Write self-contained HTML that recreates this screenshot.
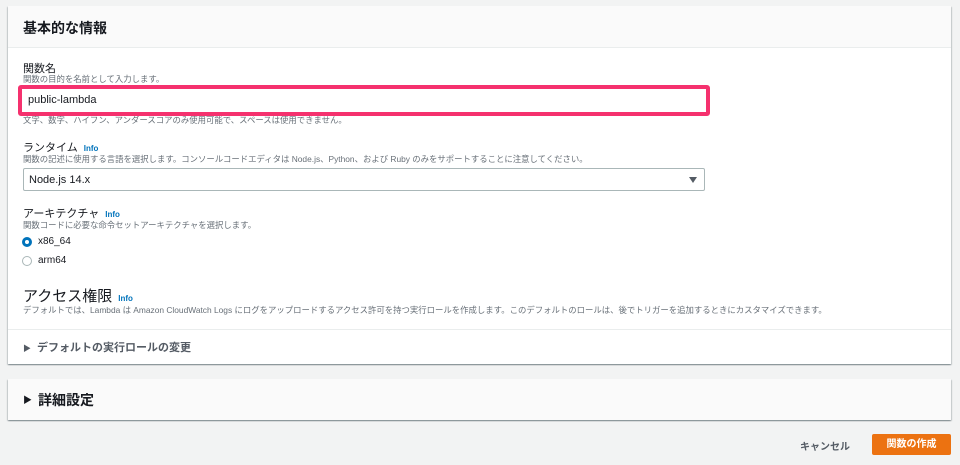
<!DOCTYPE html>
<html><head><meta charset="utf-8"><style>
*{margin:0;padding:0;box-sizing:border-box}
body{width:960px;height:465px;background:#f2f3f3;font-family:"Liberation Sans","Noto Sans CJK JP",sans-serif;color:#16191f;position:relative;overflow:hidden}
.a{position:absolute;white-space:nowrap}
.card{position:absolute;left:8px;width:943px;background:#fff;box-shadow:0 1px 1px rgba(0,28,36,.3),1px 1px 1px rgba(0,28,36,.15),-1px 1px 1px rgba(0,28,36,.15)}
.lbl{font-size:11px;color:#16191f}
.sub{font-size:8.4px;color:#687078}
.info{font-size:8px;color:#0073bb;font-weight:bold;margin-left:6px}
</style></head><body>
<div class="card" style="top:6px;height:358px">
 <div style="height:42px;background:#fafafa;border-bottom:1px solid #eaeded"></div>
 <div style="position:absolute;left:0;right:0;top:323px;border-top:1px solid #eaeded"></div>
</div>
<div class="card" style="top:379px;height:41px;background:#fafafa"></div>

<div class="a" style="left:23px;top:18px;font-size:14px;font-weight:bold">基本的な情報</div>
<div class="a lbl" style="left:23px;top:60px">関数名</div>
<div class="a sub" style="left:23px;top:73px">関数の目的を名前として入力します。</div>
<div class="a sub" style="left:23px;top:114px">文字、数字、ハイフン、アンダースコアのみ使用可能で、スペースは使用できません。</div>
<div class="a" style="left:18px;top:85px;width:692px;height:31px;border:4px solid #f5316e;border-radius:3px;background:#fff"></div>
<div class="a" style="left:28px;top:94px;font-size:11px">public-lambda</div>

<div class="a lbl" style="left:23px;top:139px">ランタイム<span class="info">Info</span></div>
<div class="a sub" style="left:23px;top:153px">関数の記述に使用する言語を選択します。コンソールコードエディタは Node.js、Python、および Ruby のみをサポートすることに注意してください。</div>
<div class="a" style="left:23px;top:168px;width:682px;height:23px;border:1px solid #aab7b8;border-radius:2px;background:#fff"></div>
<div class="a" style="left:29px;top:174px;font-size:11px">Node.js 14.x</div>
<div class="a" style="left:689px;top:177px;width:0;height:0;border-left:4.5px solid transparent;border-right:4.5px solid transparent;border-top:6px solid #545b64"></div>

<div class="a lbl" style="left:23px;top:205px">アーキテクチャ<span class="info">Info</span></div>
<div class="a sub" style="left:23px;top:219px">関数コードに必要な命令セットアーキテクチャを選択します。</div>
<div class="a" style="left:22px;top:237px;width:10px;height:10px;border-radius:50%;border:3px solid #0073bb"></div>
<div class="a" style="left:38px;top:236px;font-size:10px">x86_64</div>
<div class="a" style="left:22px;top:256px;width:10px;height:10px;border-radius:50%;border:1px solid #aab7b8"></div>
<div class="a" style="left:38px;top:255px;font-size:10px">arm64</div>

<div class="a" style="left:23px;top:285px;font-size:15px">アクセス権限<span class="info">Info</span></div>
<div class="a sub" style="left:23px;top:304px">デフォルトでは、Lambda は Amazon CloudWatch Logs にログをアップロードするアクセス許可を持つ実行ロールを作成します。このデフォルトのロールは、後でトリガーを追加するときにカスタマイズできます。</div>
<div class="a" style="left:23px;top:339px;font-size:11px;font-weight:bold;color:#545b64"><span style="font-size:8px;margin-right:6px">▶</span>デフォルトの実行ロールの変更</div>
<div class="a" style="left:23px;top:390px;font-size:14px;font-weight:bold"><span style="font-size:9px;margin-right:6px;vertical-align:2px">▶</span>詳細設定</div>

<div class="a" style="left:800px;top:438px;font-size:10px;font-weight:bold;color:#545b64">キャンセル</div>
<div class="a" style="left:872px;top:434px;width:79px;height:21px;background:#ec7211;border-radius:2px;color:#fff;font-size:10px;font-weight:bold;text-align:center;line-height:21px">関数の作成</div>
</body></html>
